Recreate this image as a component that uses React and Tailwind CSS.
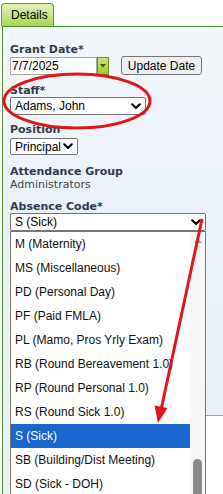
import React from 'react'

const codes = [
  'M (Maternity)',
  'MS (Miscellaneous)',
  'PD (Personal Day)',
  'PF (Paid FMLA)',
  'PL (Mamo, Pros Yrly Exam)',
  'RB (Round Bereavement 1.0)',
  'RP (Round Personal 1.0)',
  'RS (Round Sick 1.0)',
  'S (Sick)',
  'SB (Building/Dist Meeting)',
  'SD (Sick - DOH)',
]

function Chevron() {
  return (
    <svg width="10" height="7" viewBox="0 0 10 7" className="shrink-0">
      <path d="M1.2 1.2 L5 5 L8.8 1.2" fill="none" stroke="#000" strokeWidth="2" strokeLinecap="round" strokeLinejoin="round" />
    </svg>
  )
}

function Label({ children }) {
  return (
    <div className="h-[12px] leading-[12px] text-[11px] font-bold text-[#2f3c4e] font-['DejaVu_Sans',sans-serif] whitespace-nowrap">
      {children}
    </div>
  )
}

function Select({ value, className = '' }) {
  return (
    <div className={`flex items-center justify-between bg-white border border-[#767676] rounded-[2px] pl-[4px] pr-[4px] text-[12px] text-black ${className}`}>
      <span className="leading-none">{value}</span>
      <Chevron />
    </div>
  )
}

export default function App() {
  return (
    <div className="relative w-[223px] h-[494px] overflow-hidden bg-white font-['Liberation_Sans',Arial,sans-serif] flex flex-col">
      {/* Tab */}
      <div className="pt-[3px] pl-[1px] flex">
        <div className="w-[53px] h-[23px] rounded-t-[4px] border border-b-0 border-[#6a952c] bg-gradient-to-b from-[#e4f2bc] to-[#a9d451] flex items-center pl-[9px] text-[12px] text-black">
          Details
        </div>
      </div>

      {/* Panel */}
      <div className="ml-[2px] h-[389px] border-l border-t border-[#4f8f2b] bg-gradient-to-b from-[#f3f7fb] via-[#eaf1f9] to-[#e8f0f8] pl-[7px] pt-[17px] flex flex-col items-start">
        <Label>Grant Date*</Label>
        <div className="flex items-center">
          <div className="flex">
            <div className="w-[87px] h-[18px] bg-white border border-[#a5a5a5] pl-[1px] text-[12px] text-black leading-[16px]">
              7/7/2025
            </div>
            <div className="w-[12px] h-[18px] border border-[#6f8f1f] bg-gradient-to-b from-[#cde66a] to-[#9cc52e] flex items-center justify-center">
              <svg width="6" height="4" viewBox="0 0 6 4">
                <path d="M0 0 L6 0 L3 3.5 Z" fill="#35560c" />
              </svg>
            </div>
          </div>
          <div className="ml-[12px] w-[81px] h-[19px] bg-[#efefef] border border-[#767676] rounded-[3px] flex items-center justify-center text-[12px] text-black">
            Update Date
          </div>
        </div>

        <div className="mt-[10px]">
          <Label>Staff*</Label>
        </div>
        <Select value="Adams, John" className="w-[136px] h-[18px]" />

        <div className="mt-[9px]">
          <Label>Position</Label>
        </div>
        <Select value="Principal" className="mt-[2px] w-[68px] h-[17px] pl-[3px] pr-[3px] gap-[2px]" />

        <div className="mt-[11px]">
          <Label>Attendance Group</Label>
        </div>
        <div className="mt-[1px] h-[12px] leading-[12px] text-[11px] text-[#444] font-['DejaVu_Sans',sans-serif]">
          Administrators
        </div>

        <div className="mt-[10px]">
          <Label>Absence Code*</Label>
        </div>
        <div className="relative z-10">
          <Select value="S (Sick)" className="w-[196px] h-[18px]" />
          {/* open option list */}
          <div className="absolute left-0 top-full w-[196px] h-[266px] bg-white border border-[#767676] flex">
            <div className="flex-1 flex flex-col">
              {codes.map((c) => (
                <div
                  key={c}
                  className={`h-[24px] shrink-0 flex items-center pl-[4px] text-[12px] whitespace-nowrap ${
                    c === 'S (Sick)' ? 'bg-[#1a66cf] text-white' : 'text-[#111]'
                  }`}
                >
                  {c}
                </div>
              ))}
            </div>
            <div className="w-[15px] bg-[#f7f7f7] flex flex-col items-center">
              <svg width="8" height="5" viewBox="0 0 8 5" className="mt-[6px]">
                <path d="M0 5 L4 0 L8 5 Z" fill="#a3a3a3" />
              </svg>
              <div className="flex-1" />
              <div className="w-[9px] h-[36px] mb-[1px] rounded-t-full bg-[#8a8a8a]" />
            </div>
          </div>
        </div>
      </div>

      {/* below panel */}
      <div className="flex-1 flex">
        <div className="ml-[2px] w-[8px] border-l border-[#4f8f2b] bg-[#e8f0f8]" />
        <div className="flex-1 border-t border-[#a0a0a0] bg-white" />
      </div>

      {/* red annotations */}
      <svg className="absolute inset-0 z-20 pointer-events-none" width="223" height="494" viewBox="0 0 223 494">
        <ellipse cx="77" cy="101" rx="73" ry="27" fill="none" stroke="#e3141c" strokeWidth="3" />
        <line x1="202" y1="219" x2="161" y2="410" stroke="#e3141c" strokeWidth="3" />
        <polygon points="158,423 167.5,408 154.5,405.5" fill="#e3141c" />
      </svg>
    </div>
  )
}
